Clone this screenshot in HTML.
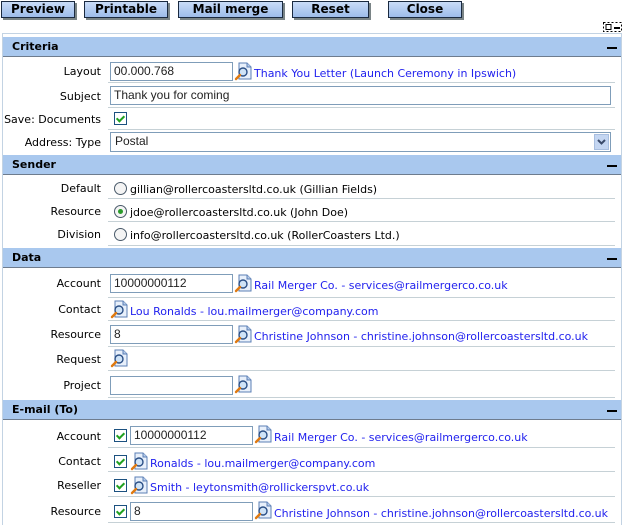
<!DOCTYPE html>
<html><head><meta charset="utf-8"><style>
*{margin:0;padding:0;box-sizing:border-box}
body{width:623px;height:526px;background:#fff;position:relative;overflow:hidden;font-family:"DejaVu Sans",Verdana,sans-serif;font-size:11px;color:#000}
.a{position:absolute}
.btn{position:absolute;top:1px;height:17px;background:linear-gradient(#c9dcf7,#9dbcea);border:1px solid #1a2a40;box-shadow:2px 2px 0 #7a8486;font-weight:bold;font-size:12px;text-align:center;line-height:15px}
.hdr{position:absolute;left:3px;width:618px;height:20px;background:#a9c8ee;border-bottom:1px solid #6e7c8e;font-weight:bold;font-size:11px;line-height:19px;padding-left:9px}
.hdr i{position:absolute;right:4px;top:10px;width:10px;height:2px;background:#000}
.lbl{position:absolute;right:522px;font-size:11px;white-space:nowrap}
.sep{position:absolute;left:108px;width:507px;height:1px;background:#c6d1d6}
.inp{position:absolute;height:19px;border:1px solid #7f9db9;background:#fff;font-family:"Liberation Sans",Arial,sans-serif;font-size:12px;line-height:17px;padding-left:3px;color:#222}
.lnk{position:absolute;color:#2222ee;font-size:11px;white-space:nowrap}
.cb{position:absolute;width:13px;height:13px;border:1px solid #1c5180;background:#fff}
.cb:after{content:"";position:absolute;left:3px;top:1px;width:3px;height:6px;border:solid #21a121;border-width:0 2px 2px 0;transform:rotate(45deg)}
.rd{position:absolute;width:13px;height:13px;border:1px solid #4a5a6a;border-radius:50%;background:#f4f4f4}
.rd.on:after{content:"";position:absolute;left:3px;top:3px;width:5px;height:5px;border-radius:50%;background:#2a9a2a}
.txt{position:absolute;font-size:11px;white-space:nowrap}
</style></head><body>
<div class="btn" style="left:1px;width:74px">Preview</div>
<div class="btn" style="left:84px;width:84px">Printable</div>
<div class="btn" style="left:178px;width:105px">Mail merge</div>
<div class="btn" style="left:292px;width:77px">Reset</div>
<div class="btn" style="left:388px;width:74px">Close</div>
<svg class="a" style="left:603px;top:22px" width="19" height="10"><rect x="0.5" y="0.5" width="18" height="9" fill="none" stroke="#000" stroke-dasharray="2,2"/><rect x="3" y="2.5" width="5" height="5" fill="none" stroke="#000"/><rect x="11" y="5" width="6" height="2" fill="#000"/></svg>
<div class="a" style="left:2px;top:33px;width:620px;height:492px;border:1px solid #c3d3e3;border-bottom:none"></div>
<svg width="0" height="0" style="position:absolute"><defs><symbol id="ic" viewBox="0 0 19 19"><path d="M5 1h8l4 4v12H5z" fill="#e8f0fb" stroke="#5b7fb6"/><path d="M13 1v4h4" fill="#b8cdea" stroke="#5b7fb6"/><circle cx="9" cy="10" r="4" fill="#cfe3f7" stroke="#2b4f86" stroke-width="1.4"/><path d="M6 13l-4 4" stroke="#e07a10" stroke-width="2.4" stroke-linecap="round"/></symbol></defs></svg>

<div class="hdr" style="top:37px">Criteria<i></i></div>
<div class="lbl" style="top:65px">Layout</div>
<div class="inp" style="left:110px;top:62px;width:123px">00.000.768</div>
<svg class="a" style="left:234px;top:62px" width="19" height="19"><use href="#ic"/></svg>
<div class="lnk" style="left:254px;top:67px">Thank You Letter (Launch Ceremony in Ipswich)</div>
<div class="sep" style="top:82px"></div>
<div class="lbl" style="top:90px">Subject</div>
<div class="inp" style="left:110px;top:86px;width:501px">Thank you for coming</div>
<div class="sep" style="top:107px"></div>
<div class="lbl" style="top:113px">Save: Documents</div>
<div class="cb" style="left:114px;top:112px"></div>
<div class="sep" style="top:129px"></div>
<div class="lbl" style="top:136px">Address: Type</div>
<div class="inp" style="left:110px;top:132px;width:501px;height:20px;padding-left:4px">Postal</div>
<div class="a" style="left:594px;top:134px;width:15px;height:16px;background:#c4d6f2;border:1px solid #a8bedf"><svg width="13" height="14"><path d="M3 5l3.5 3.5L10 5" fill="none" stroke="#3a4a6a" stroke-width="2"/></svg></div>

<div class="hdr" style="top:155px">Sender<i></i></div>
<div class="lbl" style="top:182px">Default</div>
<div class="rd" style="left:114px;top:182px"></div>
<div class="txt" style="left:130px;top:183px">gillian@rollercoastersltd.co.uk (Gillian Fields)</div>
<div class="sep" style="top:198px"></div>
<div class="lbl" style="top:205px">Resource</div>
<div class="rd on" style="left:114px;top:205px"></div>
<div class="txt" style="left:130px;top:206px">jdoe@rollercoastersltd.co.uk (John Doe)</div>
<div class="sep" style="top:221px"></div>
<div class="lbl" style="top:228px">Division</div>
<div class="rd" style="left:114px;top:228px"></div>
<div class="txt" style="left:130px;top:229px">info@rollercoastersltd.co.uk (RollerCoasters Ltd.)</div>
<div class="sep" style="top:245px"></div>

<div class="hdr" style="top:248px">Data<i></i></div>
<div class="lbl" style="top:277px">Account</div>
<div class="inp" style="left:110px;top:274px;width:123px">10000000112</div>
<svg class="a" style="left:234px;top:274px" width="19" height="19"><use href="#ic"/></svg>
<div class="lnk" style="left:254px;top:279px">Rail Merger Co. - services@railmergerco.co.uk</div>
<div class="sep" style="top:297px"></div>
<div class="lbl" style="top:303px">Contact</div>
<svg class="a" style="left:110px;top:300px" width="19" height="19"><use href="#ic"/></svg>
<div class="lnk" style="left:130px;top:305px">Lou Ronalds - lou.mailmerger@company.com</div>
<div class="sep" style="top:320px"></div>
<div class="lbl" style="top:328px">Resource</div>
<div class="inp" style="left:110px;top:325px;width:123px">8</div>
<svg class="a" style="left:234px;top:325px" width="19" height="19"><use href="#ic"/></svg>
<div class="lnk" style="left:254px;top:330px">Christine Johnson - christine.johnson@rollercoastersltd.co.uk</div>
<div class="sep" style="top:346px"></div>
<div class="lbl" style="top:353px">Request</div>
<svg class="a" style="left:110px;top:349px" width="19" height="19"><use href="#ic"/></svg>
<div class="sep" style="top:370px"></div>
<div class="lbl" style="top:379px">Project</div>
<div class="inp" style="left:110px;top:376px;width:123px"></div>
<svg class="a" style="left:234px;top:375px" width="19" height="19"><use href="#ic"/></svg>
<div class="sep" style="top:397px"></div>

<div class="hdr" style="top:400px">E-mail (To)<i></i></div>
<div class="lbl" style="top:430px">Account</div>
<div class="cb" style="left:114px;top:429px"></div>
<div class="inp" style="left:130px;top:426px;width:123px">10000000112</div>
<svg class="a" style="left:254px;top:425px" width="19" height="19"><use href="#ic"/></svg>
<div class="lnk" style="left:274px;top:431px">Rail Merger Co. - services@railmergerco.co.uk</div>
<div class="sep" style="top:447px"></div>
<div class="lbl" style="top:455px">Contact</div>
<div class="cb" style="left:114px;top:455px"></div>
<svg class="a" style="left:130px;top:452px" width="19" height="19"><use href="#ic"/></svg>
<div class="lnk" style="left:150px;top:457px">Ronalds - lou.mailmerger@company.com</div>
<div class="sep" style="top:471px"></div>
<div class="lbl" style="top:479px">Reseller</div>
<div class="cb" style="left:114px;top:479px"></div>
<svg class="a" style="left:130px;top:476px" width="19" height="19"><use href="#ic"/></svg>
<div class="lnk" style="left:150px;top:481px">Smith - leytonsmith@rollickerspvt.co.uk</div>
<div class="sep" style="top:496px"></div>
<div class="lbl" style="top:505px">Resource</div>
<div class="cb" style="left:114px;top:505px"></div>
<div class="inp" style="left:130px;top:502px;width:123px">8</div>
<svg class="a" style="left:254px;top:501px" width="19" height="19"><use href="#ic"/></svg>
<div class="lnk" style="left:274px;top:507px">Christine Johnson - christine.johnson@rollercoastersltd.co.uk</div>
<div class="sep" style="top:522px"></div>
</body></html>
